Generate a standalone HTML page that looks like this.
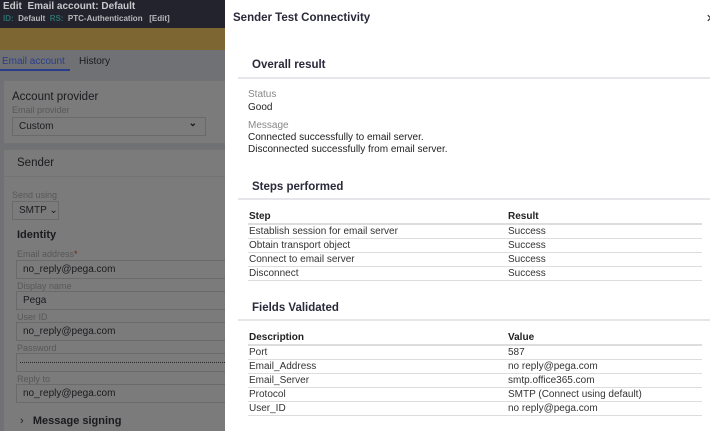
<!DOCTYPE html>
<html><head><meta charset="utf-8"><style>
*{margin:0;padding:0;box-sizing:border-box}
body{width:710px;height:431px;overflow:hidden;position:relative;font-family:"Liberation Sans",sans-serif;background:#fff}
.l{position:absolute;left:0;top:0;width:225px;height:431px;background:#707174;overflow:hidden;color:#1b1b1f}
.a{position:absolute;white-space:nowrap}
.hd{position:absolute;left:0;top:0;width:225px;height:28px;background:#22232d}
.gold{position:absolute;left:0;top:28px;width:225px;height:22px;background:#7e6632}
.card{position:absolute;left:3px;width:225px;background:#7b7b7b;border:1px solid #727275}
.inp{position:absolute;border:1px solid #6a6a6a;background:#7b7b7b;height:19px;font-size:10px;padding:3px 6px;white-space:nowrap}
.lab{font-size:9px;color:#585858}
.r{position:absolute;left:225px;top:0;width:485px;height:431px;background:#fff;color:#222}
.h{position:absolute;font-size:11.5px;font-weight:bold;color:#2a2a3a}
.sep{position:absolute;left:13px;right:0;height:2px;background:#e6e6ea}
table{position:absolute;left:23px;width:454px;border-collapse:collapse;font-size:10px;color:#333}
td,th{text-align:left;height:14px;padding:0 1px;border-bottom:1px solid #ddd;line-height:13px}
th{font-weight:bold;color:#222;border-bottom:2px solid #ddd}
td:first-child,th:first-child{width:259px}
.g{font-size:10px;color:#888}
.t{font-size:10px;color:#222}
</style></head><body>
<div class="l">
<div class="hd"></div>
<div class="a" style="left:3px;top:1px;font-size:10px;font-weight:bold;color:#c8c8cc">Edit&nbsp; Email account: Default</div>
<div class="a" style="left:3px;top:14px;font-size:8px;font-weight:bold;color:#b8b8bc"><span style="color:#2d6e6e">ID:</span>&nbsp; Default &nbsp;<span style="color:#2d6e6e">RS:</span>&nbsp; PTC-Authentication &nbsp; [Edit]</div>
<div class="gold"></div>
<div class="a" style="left:2px;top:56px;font-size:10px;color:#2b3d8a">Email account</div>
<div class="a" style="left:79px;top:56px;font-size:10px">History</div>
<div class="a" style="left:0;top:69px;width:70px;height:2px;background:#2b3d8a"></div>
<div class="card" style="top:80px;height:64px"></div>
<div class="a" style="left:12px;top:91px;font-size:11.5px">Account provider</div>
<div class="a lab" style="left:12px;top:105px">Email provider</div>
<div class="inp" style="left:12px;top:117px;width:194px">Custom<span style="position:absolute;right:8px;top:0px;font-size:10px;font-weight:bold">&#8964;</span></div>
<div class="card" style="top:149px;height:290px"></div>
<div class="a" style="left:17px;top:157px;font-size:11.5px">Sender</div>
<div class="a" style="left:3px;top:176px;width:225px;height:1px;background:#737376"></div>
<div class="a lab" style="left:12px;top:190px">Send using</div>
<div class="inp" style="left:12px;top:201px;width:47px">SMTP &#8964;</div>
<div class="a" style="left:17px;top:229px;font-size:11px;font-weight:bold">Identity</div>
<div class="a lab" style="left:17px;top:249px">Email address<span style="color:#7a1a1a">*</span></div>
<div class="inp" style="left:16px;top:260px;width:220px">no_reply@pega.com</div>
<div class="a lab" style="left:17px;top:281px">Display name</div>
<div class="inp" style="left:16px;top:291px;width:220px">Pega</div>
<div class="a lab" style="left:17px;top:312px">User ID</div>
<div class="inp" style="left:16px;top:322px;width:220px">no_reply@pega.com</div>
<div class="a lab" style="left:17px;top:343px">Password</div>
<div class="inp" style="left:16px;top:353px;width:220px"><div style="position:absolute;left:3px;right:0;top:8px;border-top:1px dotted #2a2a2a"></div></div>
<div class="a lab" style="left:17px;top:374px">Reply to</div>
<div class="inp" style="left:16px;top:384px;width:220px">no_reply@pega.com</div>
<div class="a" style="left:20px;top:415px;font-size:11px">&#x203A;&nbsp;&nbsp; <b style="font-weight:bold">Message signing</b></div>
</div>
<div class="r">
<div class="h" style="left:8px;top:12px">Sender Test Connectivity</div>
<div class="a" style="left:481px;top:12px;font-size:11px">&#x2715;</div>
<div class="h" style="left:27px;top:59px">Overall result</div>
<div class="sep" style="top:77px"></div>
<div class="a g" style="left:23px;top:89px">Status</div>
<div class="a t" style="left:23px;top:102px">Good</div>
<div class="a g" style="left:23px;top:120px">Message</div>
<div class="a t" style="left:23px;top:132px">Connected successfully to email server.</div>
<div class="a t" style="left:23px;top:144px">Disconnected successfully from email server.</div>
<div class="h" style="left:27px;top:181px">Steps performed</div>
<div class="sep" style="top:198px"></div>
<table style="top:210px">
<tr><th>Step</th><th>Result</th></tr>
<tr><td>Establish session for email server</td><td>Success</td></tr>
<tr><td>Obtain transport object</td><td>Success</td></tr>
<tr><td>Connect to email server</td><td>Success</td></tr>
<tr><td>Disconnect</td><td>Success</td></tr>
</table>
<div class="h" style="left:27px;top:302px">Fields Validated</div>
<div class="sep" style="top:319px"></div>
<table style="top:331px">
<tr><th>Description</th><th>Value</th></tr>
<tr><td>Port</td><td>587</td></tr>
<tr><td>Email_Address</td><td>no reply@pega.com</td></tr>
<tr><td>Email_Server</td><td>smtp.office365.com</td></tr>
<tr><td>Protocol</td><td>SMTP (Connect using default)</td></tr>
<tr><td>User_ID</td><td>no reply@pega.com</td></tr>
</table>
</div>
</body></html>
